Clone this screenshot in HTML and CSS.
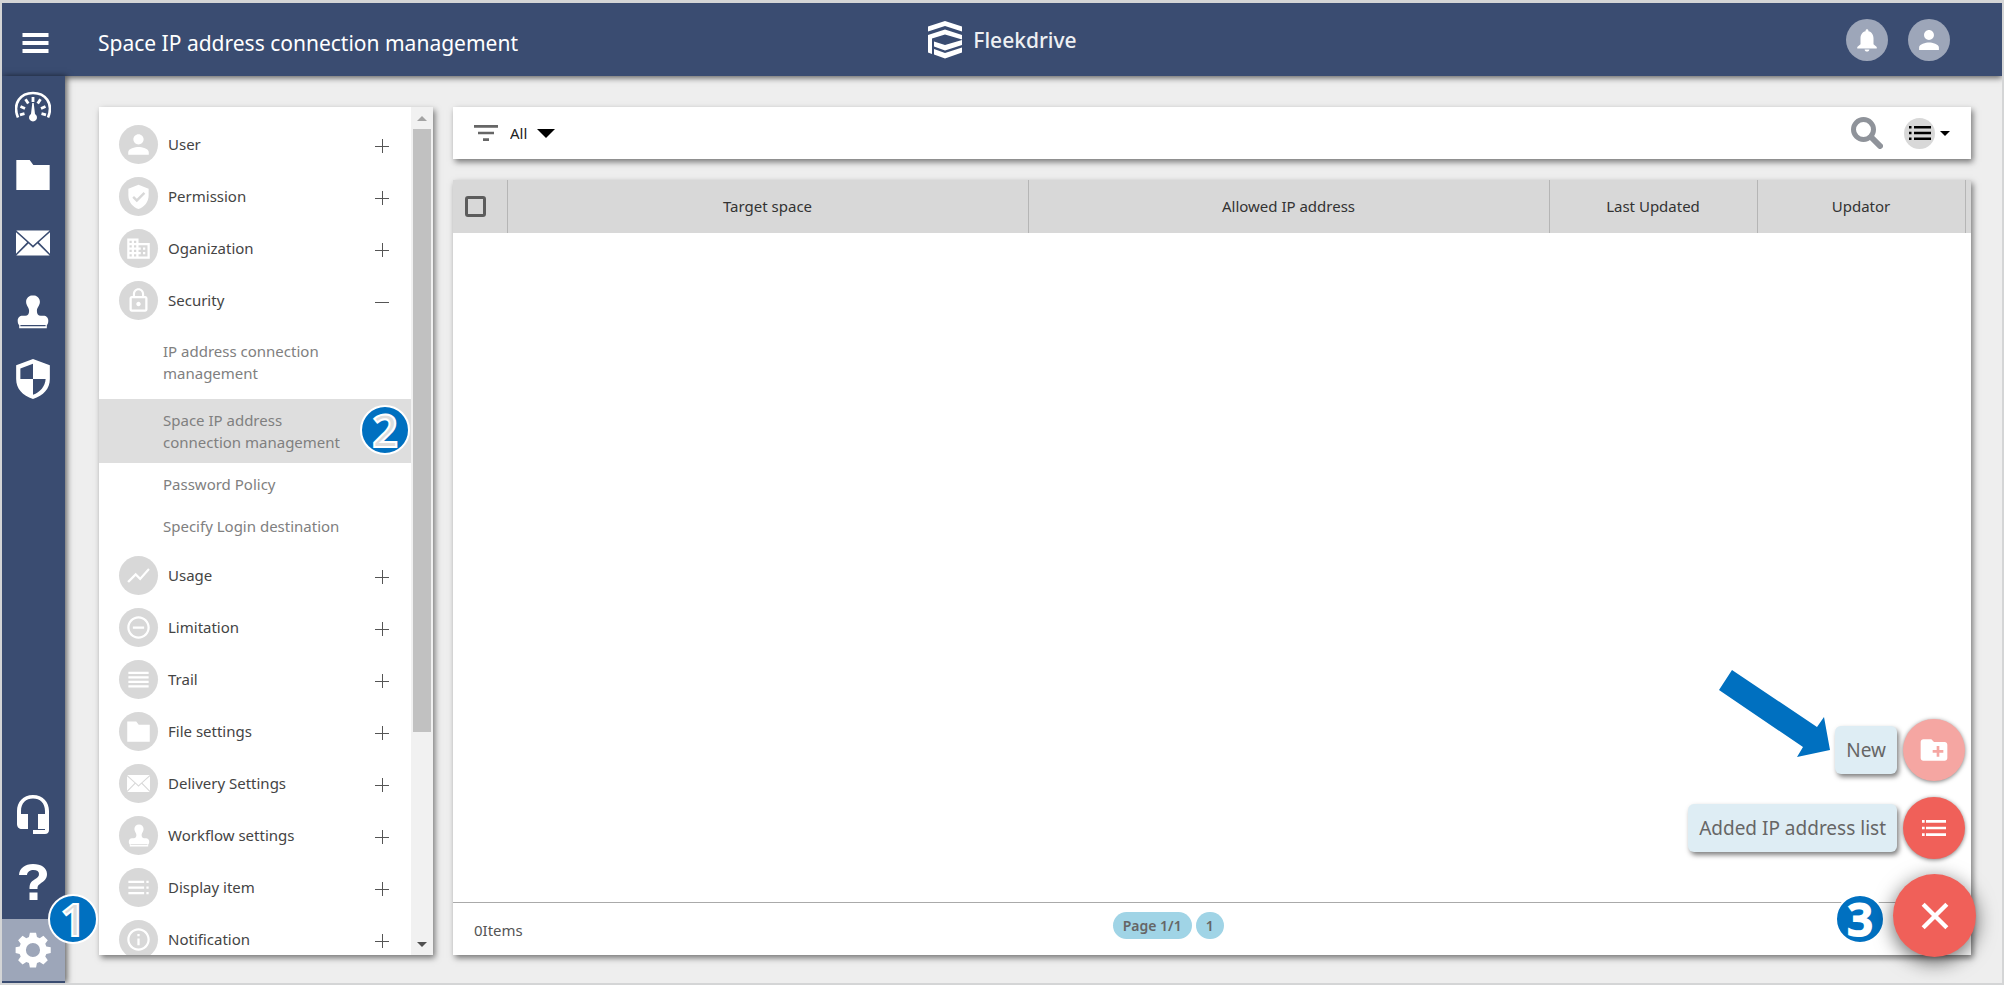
FILE: index.html
```html
<!DOCTYPE html>
<html lang="en">
<head>
    <meta charset="UTF-8">
    <meta name="viewport" content="width=device-width, initial-scale=1.0">
    <title>Space IP address connection management</title>
    <link rel="stylesheet" href="styles.css">
</head>
<body>
    <!-- Shared icons -->
    <svg class="icon-defs" aria-hidden="true">
        <symbol id="person" viewBox="1.5 1.5 21 21"><path d="M12 12c2.2 0 4-1.8 4-4s-1.8-4-4-4-4 1.8-4 4 1.8 4 4 4zm0 2c-2.7 0-8 1.3-8 4v2h16v-2c0-2.700-5.300-4-8-4z"/></symbol>
        <symbol id="folder" viewBox="0 0 24 24"><path d="M2 3h8l2.200 3H22v15H2z"/></symbol>
        <symbol id="mail" viewBox="0 0 24 24"><path d="M2 4.500h20L12 13.500zM1.800 5.600 8.500 11.600 1.800 18.500zM22.200 5.600v12.900l-6.700-6.900zM9.300 12.300l2.700 2.500 2.700-2.500 7.300 7.200H2z"/></symbol>
        <symbol id="stamp" viewBox="0 0 24 24"><path d="M12 1.500c-2.700 0-4.600 2-4.600 4.400 0 2.700 2 3.600 2 6.100 0 2-.8 3.200-2.600 3.200H5c-1.900 0-3.200 1.400-3.200 3.200 0 1.700.4 2.600 1 3V23.500h18.400V21.400c.6-.4 1-1.300 1-3 0-1.800-1.300-3.200-3.200-3.200h-1.800c-1.800 0-2.600-1.200-2.600-3.200 0-2.500 2-3.400 2-6.100 0-2.400-1.900-4.400-4.600-4.400zM3.600 21.300h16.800v.8H3.600z" fill-rule="evenodd"/></symbol>
        <symbol id="list" viewBox="0 0 24 24"><path d="M1 5h2.500v2.500H1zm5 0h17v2.500H6zM1 10.700h2.500v2.500H1zm5 0h17v2.500H6zM1 16.500h2.500V19H1zm5 0h17V19H6z"/></symbol>
    </svg>

    <header class="header">
        <button class="menu-button" aria-label="Menu">
            <svg class="burger" viewBox="0 0 26 20"><path d="M0 0h26v4H0zM0 8h26v4H0zM0 16h26v4H0z"/></svg>
        </button>
        <h1 class="title">Space IP address connection management</h1>
        <a class="logo" href="#">
            <svg class="logo-mark" viewBox="0 0 36 38"><path d="M1 5.500 18 0l17 5.500v5L18 5 1 10.500zM1 14l17-5.500L35 14v4.500L18 13.500 5 17.500V33l-4-1.500zM7 20.500l11 3.500 17-5v5L18 29.500 7 25.500zM7 28l11 4 17-5.500v5L18 37.500 7 33.500z"/></svg>
            <span>Fleekdrive</span>
        </a>
        <div class="header-actions">
            <button class="round-button" aria-label="Notifications">
                <svg viewBox="0 0 24 24"><path d="M12 2c-.8 0-1.300.6-1.300 1.300v.7C7.700 4.600 6 7.200 6 10.400v5.600l-3 2.500v1.300h18v-1.300L18 16v-5.600c0-3.200-1.700-5.800-4.700-6.400v-.7C13.300 2.600 12.800 2 12 2zm-2.200 18.700c0 1.200 1 1.900 2.200 1.900s2.200-.7 2.200-1.900z"/></svg>
            </button>
            <button class="round-button" aria-label="Account">
                <svg><use href="#person"/></svg>
            </button>
        </div>
    </header>

    <div class="page">
        <nav class="rail">
            <a class="rail-link" href="#" aria-label="Dashboard">
                <svg viewBox="0 0 36 36"><path d="M3 28.500C-3 14 6 4 18 4s21 10 15 24.500" fill="none" stroke="#fff" stroke-width="2.600"/><path d="M18 8v5M10.500 10.200l2.800 4.300M25.500 10.200l-2.800 4.300M5.500 17.500l4.500 2M30.500 17.500l-4.500 2M5 25.800l4.500-1.200M31 25.800l-4.500-1.200" stroke="#fff" stroke-width="2.800"/><path d="M17.300 14h1.400l1.300 11a4 4 0 1 1-4 0z"/></svg>
            </a>
            <a class="rail-link" href="#" aria-label="Folders"><svg class="wide"><use href="#folder"/></svg></a>
            <a class="rail-link" href="#" aria-label="Mail"><svg class="wide"><use href="#mail"/></svg></a>
            <a class="rail-link" href="#" aria-label="Workflow"><svg><use href="#stamp"/></svg></a>
            <a class="rail-link" href="#" aria-label="Security">
                <svg class="wide" viewBox="0 0 38 38"><path d="M19 0 35 6v13c0 9-6 16-16 19C9 35 3 28 3 19V6zM19 4.500 7 9v10h12zM19 19v15c7-2.500 11.500-8 12-15z" fill-rule="evenodd"/></svg>
            </a>
            <div class="rail-bottom">
                <a class="rail-link" href="#" aria-label="Support">
                    <svg class="wide" viewBox="0 0 40 40"><path d="M20 1C10 1 4 8 4 17v13c0 3 2 5 5 5h6V20H8v-3C8 9 13 4.500 20 4.500S32 9 32 17v3h-7v15h7v1H20v4h12c2.500 0 4-1.500 4-4V17C36 8 30 1 20 1z"/></svg>
                </a>
                <a class="rail-link" href="#" aria-label="Help">
                    <svg viewBox="0 0 30 36"><path d="M1 11C1.500 4 7 0 15 0c8.500 0 14 4 14 10 0 5-3 7-6.500 9.500C20 21.300 19.500 22 19.500 25h-8c0-5 1-7 5-9.500 3-2 4.500-3 4.500-5.500S19 6 15.500 6C12 6 9.500 7.500 9 11zM11.500 28.500h8V36h-8z"/></svg>
                </a>
                <a class="rail-link active" href="#" aria-label="Settings">
                    <svg viewBox="0 0 24 24"><path fill-rule="evenodd" d="m9.700.5h4.600l.7 3.300 2 .8 2.800-1.800 3.300 3.300-1.900 2.700.8 2 3.300.6v4.300l-3.300.7-.8 2 1.900 2.700-3.300 3.300-2.800-1.900-2 .8-.7 3.200H9.700L9 23.300l-2-.8-2.800 1.900L.9 21.100l1.900-2.700-.8-2-3-.7v-4.300l3-.6.8-2L.9 6.100l3.300-3.300L7 4.600l2-.8zM12 8.200a5.300 5.300 0 1 0 0 10.600 5.300 5.300 0 0 0 0-10.600z" transform="translate(1.300 0) scale(.89)"/></svg>
                    <span class="badge badge-rail">1</span>
                </a>
            </div>
        </nav>

        <main class="content">
            <aside class="settings">
                <ul class="menu">
                    <li><button class="menu-item"><span class="menu-icon"><svg><use href="#person"/></svg></span>User<span class="sign"></span></button></li>
                    <li><button class="menu-item"><span class="menu-icon"><svg viewBox="0 0 24 24"><path fill-rule="evenodd" d="M12 1.500 3 5v6c0 5.600 3.800 10.300 9 12 5.200-1.700 9-6.400 9-12V5zM10.500 17l-4-4L8 11.500l2.500 2.500 6-6L18 9.500z"/></svg></span>Permission<span class="sign"></span></button></li>
                    <li><button class="menu-item"><span class="menu-icon"><svg viewBox="0 0 24 24"><path d="M12 7V3H2v18h20V7H12zM6 19H4v-2h2v2zm0-4H4v-2h2v2zm0-4H4V9h2v2zm0-4H4V5h2v2zm4 12H8v-2h2v2zm0-4H8v-2h2v2zm0-4H8V9h2v2zm0-4H8V5h2v2zm10 12h-8v-2h2v-2h-2v-2h2v-2h-2V9h8v10zm-2-8h-2v2h2v-2zm0 4h-2v2h2v-2z"/></svg></span>Oganization<span class="sign"></span></button></li>
                    <li>
                        <button class="menu-item open" aria-expanded="true"><span class="menu-icon"><svg viewBox="0 0 24 24"><path d="M12 17c1.100 0 2-.9 2-2s-.9-2-2-2-2 .9-2 2 .9 2 2 2zm6-9h-1V6c0-2.800-2.200-5-5-5S7 3.200 7 6v2H6c-1.100 0-2 .9-2 2v10c0 1.100.9 2 2 2h12c1.100 0 2-.9 2-2V10c0-1.100-.9-2-2-2zM8.900 6c0-1.700 1.400-3.100 3.100-3.100s3.100 1.400 3.100 3.100v2H8.900V6zM18 20H6V10h12v10z"/></svg></span>Security<span class="sign"></span></button>
                        <ul class="submenu">
                            <li><a class="submenu-item first" href="#">IP address connection management</a></li>
                            <li><a class="submenu-item selected" href="#">Space IP address connection management<span class="badge badge-menu">2</span></a></li>
                            <li><a class="submenu-item" href="#">Password Policy</a></li>
                            <li><a class="submenu-item" href="#">Specify Login destination</a></li>
                        </ul>
                    </li>
                    <li><button class="menu-item"><span class="menu-icon"><svg viewBox="0 0 24 24"><path d="m3.500 18.500 6-6 4 4L22 6.900l-1.400-1.400-7.100 8-4-4L2 17z"/></svg></span>Usage<span class="sign"></span></button></li>
                    <li><button class="menu-item"><span class="menu-icon"><svg viewBox="0 0 24 24"><path d="M7 11v2h10v-2H7zm5-9C6.500 2 2 6.500 2 12s4.500 10 10 10 10-4.500 10-10S17.500 2 12 2zm0 18c-4.400 0-8-3.600-8-8s3.600-8 8-8 8 3.600 8 8-3.600 8-8 8z"/></svg></span>Limitation<span class="sign"></span></button></li>
                    <li><button class="menu-item"><span class="menu-icon"><svg viewBox="0 0 24 24"><path d="M3 5h18v2H3zM3 9h18v2H3zM3 13h18v2H3zM3 17h18v2H3z"/></svg></span>Trail<span class="sign"></span></button></li>
                    <li><button class="menu-item"><span class="menu-icon"><svg><use href="#folder"/></svg></span>File settings<span class="sign"></span></button></li>
                    <li><button class="menu-item"><span class="menu-icon"><svg><use href="#mail"/></svg></span>Delivery Settings<span class="sign"></span></button></li>
                    <li><button class="menu-item"><span class="menu-icon small"><svg><use href="#stamp"/></svg></span>Workflow settings<span class="sign"></span></button></li>
                    <li><button class="menu-item"><span class="menu-icon"><svg viewBox="0 0 24 24"><path d="M3 6h14v2H3zM3 11h14v2H3zM3 16h14v2H3zM19 6h2v2h-2zM19 11h2v2h-2zM19 16h2v2h-2z"/></svg></span>Display item<span class="sign"></span></button></li>
                    <li><button class="menu-item"><span class="menu-icon"><svg viewBox="0 0 24 24"><path d="M11 7h2v2h-2zM11 11h2v6h-2zM12 2C6.500 2 2 6.500 2 12s4.500 10 10 10 10-4.500 10-10S17.500 2 12 2zm0 18c-4.400 0-8-3.600-8-8s3.600-8 8-8 8 3.600 8 8-3.600 8-8 8z"/></svg></span>Notification<span class="sign"></span></button></li>
                </ul>
                <div class="scrollbar">
                    <span class="scroll-up"></span>
                    <div class="scroll-track"><div class="scroll-thumb"></div></div>
                    <span class="scroll-down"></span>
                </div>
            </aside>

            <section class="list-area">
                <div class="toolbar">
                    <svg class="filter-icon" viewBox="0 0 24 16"><path d="M0 0h24v2.700H0zM4 6.700h16v2.600H4zM9 13.300h6V16H9z"/></svg>
                    <select class="filter-select" aria-label="Filter"><option>All</option></select>
                    <svg class="select-arrow" viewBox="0 0 18 9"><path d="M0 0h18L9 9z"/></svg>
                    <button class="search-button" aria-label="Search">
                        <svg viewBox="0 0 32 32"><circle cx="12.500" cy="12.500" r="10" fill="none" stroke="#8f939a" stroke-width="5"/><path d="m20 20 9 9" stroke="#8f939a" stroke-width="6" stroke-linecap="round"/></svg>
                    </button>
                    <button class="view-button" aria-label="List view">
                        <span class="view-icon"><svg><use href="#list"/></svg></span>
                        <svg class="caret" viewBox="0 0 10 5"><path d="M0 0h10L5 5z"/></svg>
                    </button>
                </div>

                <div class="table-card">
                    <table class="table">
                        <thead>
                            <tr>
                                <th class="col-check"><input class="checkbox" type="checkbox" aria-label="Select all"></th>
                                <th class="col-wide">Target space</th>
                                <th class="col-wide">Allowed IP address</th>
                                <th class="col-narrow">Last Updated</th>
                                <th class="col-narrow">Updator</th>
                                <td class="col-end"></td>
                            </tr>
                        </thead>
                    </table>
                    <div class="table-footer">
                        <span class="count">0Items</span>
                        <button class="pill">Page 1/1</button>
                        <button class="pill">1</button>
                    </div>
                </div>
            </section>
        </main>
    </div>

    <!-- Floating actions -->
    <div class="actions">
        <div class="action-row">
            <label class="action-label" for="new">New</label>
            <button id="new" class="fab faded">
                <svg viewBox="0 0 24 24"><path fill-rule="evenodd" d="M20 6h-8l-2-2H4c-1.100 0-2 .9-2 2v12c0 1.100.9 2 2 2h16c1.100 0 2-.9 2-2V8c0-1.100-.9-2-2-2zm-1 8h-3v3h-2v-3h-3v-2h3V9h2v3h3v2z"/></svg>
            </button>
        </div>
        <div class="action-row">
            <label class="action-label" for="added-list">Added IP address list</label>
            <button id="added-list" class="fab">
                <svg viewBox="0 0 24 24"><path d="M3 6h2v2H3zM6 6h15v2H6zM3 11h2v2H3zM6 11h15v2H6zM3 16h2v2H3zM6 16h15v2H6z"/></svg>
            </button>
        </div>
        <div class="action-row last">
            <span class="badge solid">3</span>
            <button class="fab large" aria-label="Close">
                <svg viewBox="0 0 26 26"><path d="m2 2 22 22M24 2 2 24" stroke="#fff" stroke-width="4"/></svg>
            </button>
        </div>
        <svg class="arrow" viewBox="0 0 112 88"><path d="M13 0l85 57 7-10 6 33-33 7 6-10L0 20z"/></svg>
    </div>
</body>
</html>
```

FILE: styles.css
```css
* {
    box-sizing: border-box;
}
body {
    font-family: 'Noto Sans', sans-serif;
    font-size: 15px;
    color: #444;
    margin: 0;
    height: 100vh;
    display: flex;
    flex-direction: column;
    position: relative;
    background-color: #eee;
    border: 2px solid #d4d5d6;
    border-top-width: 3px;
    overflow: hidden;
}
ul {
    list-style: none;
    margin: 0;
    padding: 0;
}
button {
    font-family: inherit;
    border: none;
    padding: 0;
    background: none;
    cursor: pointer;
}
svg {
    display: block;
    fill: #fff;
}
.icon-defs {
    display: none;
}

/* Header */
.header {
    display: grid;
    grid-template-columns: 96px 1fr auto 1fr;
    align-items: center;
    height: 73px;
    flex-shrink: 0;
    background-color: #3a4c71;
    box-shadow: 0 2px 6px rgba(0, 0, 0, 0.6);
    position: relative;
    z-index: 2;
}
.menu-button {
    padding: 6px 20px 0;
}
.burger {
    width: 27px;
    height: 20px;
}
.title {
    color: #fff;
    font-size: 21px;
    font-weight: 400;
    line-height: 26px;
    margin: 6px 0 0;
    white-space: nowrap;
}
.logo {
    display: flex;
    align-items: center;
    gap: 10px;
    margin-right: 96px;
    color: #eef0f3;
    font-size: 21px;
    font-weight: 500;
    text-decoration: none;
}
.logo-mark {
    width: 36px;
    height: 38px;
}
.header-actions {
    display: flex;
    justify-content: flex-end;
    gap: 20px;
    padding-right: 52px;
}
.round-button {
    display: flex;
    align-items: center;
    justify-content: center;
    width: 42px;
    height: 42px;
    border-radius: 50%;
    background-color: #9da6b9;
}
.round-button svg {
    width: 26px;
    height: 26px;
}

/* Left icon rail */
.page {
    display: flex;
    flex: 1;
    min-height: 0;
}
.rail {
    display: flex;
    flex-direction: column;
    width: 63px;
    flex-shrink: 0;
    background-color: #3a4c71;
    box-shadow: 2px 0 6px rgba(0, 0, 0, 0.6);
    position: relative;
    z-index: 3;
}
.rail-link {
    display: flex;
    align-items: center;
    justify-content: center;
    height: 68px;
    padding: 0 2px 6px 0;
    position: relative;
}
.rail-link svg {
    width: 36px;
    height: 36px;
}
.rail-link svg.wide {
    width: 40px;
    height: 40px;
}
.rail-bottom {
    margin-top: auto;
}
.rail-link.active {
    height: 62px;
    margin-bottom: 2px;
    padding-bottom: 0;
    background-color: #9da6b9;
}

/* Numbered markers */
.badge {
    display: flex;
    align-items: center;
    justify-content: center;
    width: 50px;
    height: 50px;
    border: 2px solid #fff;
    border-radius: 50%;
    background-color: #0070c0;
    color: #ddd;
    font-size: 45px;
    font-weight: 600;
    line-height: 46px;
    -webkit-text-stroke: 2px #fff;
}
.badge-rail {
    position: absolute;
    top: -25px;
    left: 46px;
}
.badge-menu {
    position: absolute;
    top: 6px;
    right: 1px;
}
.badge.solid {
    margin-top: 6px;
    color: #fff;
}

/* Settings menu */
.content {
    display: flex;
    gap: 20px;
    flex: 1;
    min-width: 0;
    padding: 31px 31px 28px 34px;
}
.settings {
    display: flex;
    width: 334px;
    flex-shrink: 0;
    background-color: #fff;
    box-shadow: 2px 3px 6px rgba(0, 0, 0, 0.5);
}
.menu {
    flex: 1;
    padding-top: 11px;
    overflow: hidden;
}
.menu-item {
    display: flex;
    align-items: center;
    gap: 10px;
    width: 100%;
    height: 52px;
    padding: 0 22px 0 20px;
    color: #444;
    font-size: 15px;
}
.menu-icon {
    display: flex;
    align-items: center;
    justify-content: center;
    width: 39px;
    height: 39px;
    border-radius: 50%;
    background-color: #d8d8d8;
}
.menu-icon svg {
    width: 27px;
    height: 27px;
}
.menu-icon.small svg {
    width: 24px;
    height: 24px;
}
.sign {
    width: 14px;
    height: 14px;
    margin: 4px 0 0 auto;
    background: linear-gradient(#555, #555) center / 14px 1px no-repeat,
                linear-gradient(#555, #555) center / 1px 14px no-repeat;
}
.open .sign {
    background: linear-gradient(#555, #555) center / 14px 1px no-repeat;
}
.submenu {
    padding-bottom: 2px;
}
.submenu-item {
    display: block;
    padding: 10px 58px 10px 64px;
    color: #808080;
    line-height: 22px;
    text-decoration: none;
    position: relative;
}
.submenu-item.first {
    padding-top: 14px;
    padding-bottom: 15px;
}
.submenu-item.selected {
    background-color: #dedede;
}
.scrollbar {
    display: flex;
    flex-direction: column;
    align-items: center;
    width: 22px;
    background-color: #f1f1f1;
}
.scroll-track {
    flex: 1;
    width: 18px;
}
.scroll-thumb {
    height: 75%;
    background-color: #c1c1c1;
}
.scroll-up,
.scroll-down {
    margin: 9px 0 8px;
    border: 5px solid transparent;
    border-top-width: 0;
    border-bottom-color: #a3a3a3;
}
.scroll-down {
    border-top: 5px solid #505050;
    border-bottom-width: 0;
}

/* List area */
.list-area {
    display: flex;
    flex-direction: column;
    gap: 21px;
    flex: 1;
    min-width: 0;
}
.toolbar {
    display: flex;
    align-items: center;
    height: 52px;
    padding: 0 21px;
    background-color: #fff;
    box-shadow: 2px 3px 6px rgba(0, 0, 0, 0.5);
}
.filter-icon {
    width: 24px;
    height: 16px;
    fill: #666;
}
.filter-select {
    appearance: none;
    border: none;
    background: none;
    width: 40px;
    margin: 0 -16px 0 12px;
    padding: 0;
    color: #222;
    font-family: inherit;
    font-size: 15px;
}
.select-arrow {
    width: 18px;
    height: 9px;
    margin-left: 3px;
    fill: #000;
    pointer-events: none;
}
.search-button {
    margin-left: auto;
}
.search-button svg {
    width: 32px;
    height: 32px;
}
.view-button {
    display: flex;
    align-items: center;
    gap: 5px;
    margin-left: 21px;
}
.view-icon {
    display: flex;
    align-items: center;
    justify-content: center;
    width: 31px;
    height: 31px;
    border-radius: 50%;
    background-color: #d8d8d8;
}
.view-icon svg {
    width: 24px;
    height: 24px;
    fill: #000;
}
.caret {
    width: 10px;
    height: 5px;
    fill: #000;
}
.table-card {
    display: flex;
    flex-direction: column;
    flex: 1;
    background-color: #fff;
    box-shadow: 2px 3px 6px rgba(0, 0, 0, 0.5);
}
.table {
    width: 100%;
    table-layout: fixed;
    border-collapse: collapse;
}
.table th {
    height: 53px;
    padding: 0 0 2px;
    border-right: 1px solid #b5b5b5;
    background-color: #d8d8d8;
    color: #333;
    font-weight: 400;
}
.table .col-check {
    width: 54px;
    padding: 0;
}
.col-narrow {
    width: 208px;
}
.col-end {
    width: 6px;
    padding: 0;
    background-color: #d8d8d8;
}
.checkbox {
    appearance: none;
    display: block;
    width: 21px;
    height: 21px;
    margin: 0 0 0 12px;
    border: 3px solid #5c5c5c;
    border-radius: 3px;
}
.table-footer {
    display: flex;
    align-items: flex-start;
    gap: 4px;
    height: 53px;
    margin-top: auto;
    padding: 9px 21px;
    border-top: 1px solid #aaa;
}
.count {
    width: 43%;
    margin-top: 8px;
    color: #555;
}
.pill {
    height: 27px;
    padding: 0 10px;
    border-radius: 14px;
    background-color: #a0d4e6;
    color: #666;
    font-size: 14px;
    font-weight: 600;
}

/* Floating actions */
.actions {
    display: flex;
    flex-direction: column;
    align-items: flex-end;
    gap: 16px;
    position: absolute;
    right: 26px;
    bottom: 26px;
    z-index: 4;
}
.action-row {
    display: flex;
    align-items: center;
    gap: 6px;
    padding-right: 11px;
}
.action-row.last {
    gap: 8px;
    margin-top: -1px;
    padding-right: 0;
}
.action-label {
    padding: 11px;
    border-radius: 6px;
    background-color: #deedf4;
    box-shadow: 2px 3px 5px rgba(0, 0, 0, 0.5);
    color: #666;
    font-size: 19px;
    line-height: 26px;
    cursor: pointer;
}
.fab {
    display: flex;
    align-items: center;
    justify-content: center;
    width: 62px;
    height: 62px;
    border-radius: 50%;
    background-color: #f06059;
    box-shadow: 0 1px 4px rgba(0, 0, 0, 0.5);
}
.fab svg {
    width: 32px;
    height: 32px;
}
.fab.faded {
    background-color: #f5a6a2;
}
.fab.large {
    width: 83px;
    height: 83px;
    box-shadow: 0 5px 20px rgba(0, 0, 0, 0.6);
}
.fab.large svg {
    width: 28px;
    height: 28px;
}
.arrow {
    position: absolute;
    right: 145px;
    bottom: 199px;
    width: 112px;
    height: 88px;
    fill: #0070c0;
}
```
